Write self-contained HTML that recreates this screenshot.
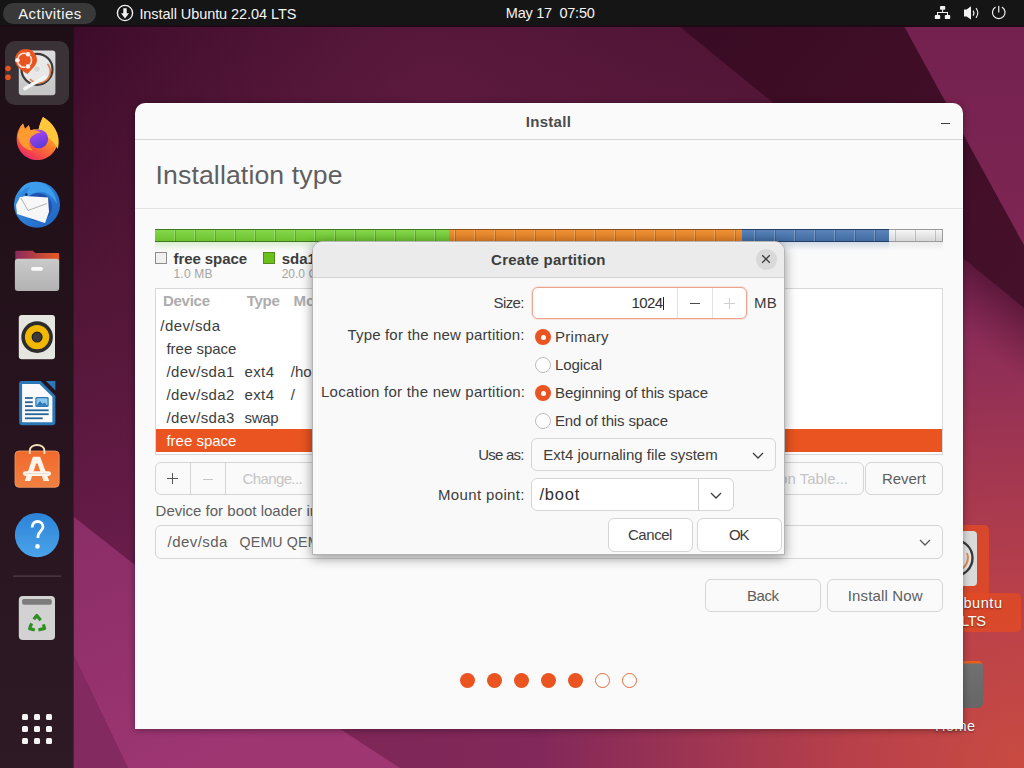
<!DOCTYPE html>
<html><head><meta charset="utf-8">
<style>
*{box-sizing:border-box;margin:0;padding:0}
html,body{width:1024px;height:768px;overflow:hidden;background:#4a1535}
body{font-family:"Liberation Sans",sans-serif;position:relative}
.a{position:absolute;white-space:nowrap}
svg{position:absolute;overflow:visible}
</style></head><body>
<svg style="left:0;top:0" width="1024" height="768" viewBox="0 0 1024 768">
<defs>
<linearGradient id="gA" gradientUnits="userSpaceOnUse" x1="74" y1="26" x2="300" y2="768">
<stop offset="0" stop-color="#3c0b29"/><stop offset="0.35" stop-color="#531637"/><stop offset="0.7" stop-color="#6a1d4c"/><stop offset="1" stop-color="#7e2758"/>
</linearGradient>
<linearGradient id="gB" gradientUnits="userSpaceOnUse" x1="700" y1="26" x2="1024" y2="300">
<stop offset="0" stop-color="#3a0b24"/><stop offset="1" stop-color="#45102a"/>
</linearGradient>
<linearGradient id="gC" gradientUnits="userSpaceOnUse" x1="0" y1="26" x2="0" y2="250">
<stop offset="0" stop-color="#74214f"/><stop offset="1" stop-color="#7e2654"/>
</linearGradient>
<radialGradient id="gD" gradientUnits="userSpaceOnUse" cx="1024" cy="768" r="760">
<stop offset="0" stop-color="#c94b41"/><stop offset="0.23" stop-color="#b8404a"/><stop offset="0.43" stop-color="#9e3552"/><stop offset="0.64" stop-color="#82285a"/><stop offset="1" stop-color="#7c2656"/>
</radialGradient>
<linearGradient id="gE" gradientUnits="userSpaceOnUse" x1="74" y1="517" x2="200" y2="768">
<stop offset="0" stop-color="#8a2d66"/><stop offset="1" stop-color="#9e3672"/>
</linearGradient>
</defs>
<rect width="1024" height="768" fill="url(#gA)"/>
<radialGradient id="gH" gradientUnits="userSpaceOnUse" cx="430" cy="90" r="380"><stop offset="0" stop-color="#6a2048" stop-opacity="0.55"/><stop offset="1" stop-color="#6a2048" stop-opacity="0"/></radialGradient>
<rect width="1024" height="768" fill="url(#gH)"/>
<polygon points="1024,305 1024,768 397,768 337,729 250,650 700,150 963,256" fill="url(#gD)"/>
<linearGradient id="gS" gradientUnits="userSpaceOnUse" x1="990" y1="277" x2="952" y2="324"><stop offset="0" stop-color="#3a0a20" stop-opacity="0.55"/><stop offset="1" stop-color="#5a1530" stop-opacity="0"/></linearGradient>
<polygon points="900,205 1024,305 1024,400 900,300" fill="url(#gS)"/>
<polygon points="679,26 904,26 1024,245 1024,308" fill="url(#gB)"/>
<polygon points="904,26 1024,26 1024,245" fill="url(#gC)"/>
<polygon points="74,517 135,565 340,729 400,768 128,768 74,656" fill="url(#gE)"/>
<polygon points="74,656 128,768 74,768" fill="#832a60"/>
</svg>
<div class="a" style="left:0px;top:0px;width:1024px;height:25px;background:#151515"></div>
<div class="a" style="left:0px;top:25px;width:1024px;height:2px;background:#1c0b14"></div>
<div class="a" style="left:3px;top:3px;width:93px;height:21px;border-radius:11px;background:#393939"></div>
<div class="a" style="left:18.20px;top:6.4px;font-size:15px;font-weight:400;color:#f4f4f4;letter-spacing:0.424px;line-height:15px;">Activities</div><svg style="left:115px;top:3px" width="20" height="20" viewBox="0 0 20 20"><circle cx="10" cy="10" r="7.6" fill="none" stroke="#f2f2f2" stroke-width="1.4"/><path d="M8.3 5.2 H11.7 V10.2 H14 L10 15.5 L6 10.2 H8.3 Z" fill="#f2f2f2"/></svg>
<div class="a" style="left:139.40px;top:6.7px;font-size:14.5px;font-weight:400;color:#f4f4f4;letter-spacing:-0.067px;line-height:14.5px;">Install Ubuntu 22.04 LTS</div><div class="a" style="left:505.80px;top:6.2px;font-size:14.5px;font-weight:400;color:#f4f4f4;letter-spacing:-0.242px;line-height:14.5px;">May 17&nbsp; 07:50</div><svg style="left:930px;top:2px" width="80" height="22" viewBox="0 0 80 22"><rect x="10" y="4" width="5.2" height="3.8" rx="0.8" fill="#f2f2f2"/><rect x="12.1" y="7.5" width="1" height="3.2" fill="#f2f2f2"/><rect x="7" y="10" width="11" height="1" fill="#f2f2f2"/><rect x="7" y="10" width="1" height="3.5" fill="#f2f2f2"/><rect x="17" y="10" width="1" height="3.5" fill="#f2f2f2"/><rect x="4.8" y="13.1" width="5.4" height="3.9" rx="0.8" fill="#f2f2f2"/><rect x="14.8" y="13.1" width="5.4" height="3.9" rx="0.8" fill="#f2f2f2"/><path d="M34 7.6 H36.6 L41 4.3 V17.6 L36.6 14.5 H34 Z" fill="#f2f2f2"/><path d="M43 8.6 Q45 11 43 13.6" fill="none" stroke="#f2f2f2" stroke-width="1.1"/><path d="M46 6.2 Q49.6 11 46 15.9" fill="none" stroke="#f2f2f2" stroke-width="1.1"/><path d="M65.6 4.95 A6.3 6.3 0 1 0 71.9 4.95" fill="none" stroke="#f2f2f2" stroke-width="1.2"/><rect x="68.15" y="3.9" width="1.2" height="6.6" fill="#f2f2f2"/></svg>
<div class="a" style="left:0px;top:27px;width:73px;height:741px;background:linear-gradient(#1e0e16,#26131d 50%,#2e1a24)"></div>
<div class="a" style="left:73px;top:27px;width:1px;height:741px;background:rgba(0,0,0,0.25)"></div>
<div class="a" style="left:5px;top:41px;width:64px;height:64px;border-radius:10px;background:#3b3237"></div>
<svg style="left:0;top:0" width="74" height="768" viewBox="0 0 74 768">
<defs>
<linearGradient id="dk1" x1="0" y1="0" x2="0" y2="1"><stop offset="0" stop-color="#dcdcdc"/><stop offset="1" stop-color="#c4c4c4"/></linearGradient>
<linearGradient id="ff1" x1="0.8" y1="0" x2="0.2" y2="1"><stop offset="0" stop-color="#ffd53a"/><stop offset="0.45" stop-color="#ff8a2a"/><stop offset="0.8" stop-color="#f5454a"/><stop offset="1" stop-color="#e0237a"/></linearGradient>
<linearGradient id="ff2" x1="0.3" y1="0" x2="0.6" y2="1"><stop offset="0" stop-color="#b046f0"/><stop offset="1" stop-color="#5a3ad8"/></linearGradient>
<linearGradient id="tb1" x1="0" y1="0" x2="1" y2="1"><stop offset="0" stop-color="#3a9ae8"/><stop offset="1" stop-color="#1f5fc0"/></linearGradient>
<linearGradient id="fl1" x1="0" y1="0" x2="1" y2="0"><stop offset="0" stop-color="#8a2a5e"/><stop offset="1" stop-color="#ea5a20"/></linearGradient>
<linearGradient id="fl2" x1="0" y1="0" x2="0" y2="1"><stop offset="0" stop-color="#cacaca"/><stop offset="1" stop-color="#b2b2b2"/></linearGradient>
<linearGradient id="sw1" x1="0" y1="0" x2="0" y2="1"><stop offset="0" stop-color="#f06a2c"/><stop offset="1" stop-color="#f08040"/></linearGradient>
<linearGradient id="hp1" x1="0" y1="0" x2="0" y2="1"><stop offset="0" stop-color="#2d82d6"/><stop offset="1" stop-color="#4aa4ea"/></linearGradient>
</defs>
<rect x="18.8" y="50.6" width="36.6" height="44.6" rx="3" fill="url(#dk1)"/>
<circle cx="37" cy="69.3" r="15.5" fill="#e8e8e8" stroke="#3a3a3a" stroke-width="2.2"/>
<path d="M47.5 64 A11.5 11.5 0 0 1 30 79" fill="none" stroke="#e57a45" stroke-width="1.6"/>
<circle cx="37" cy="69" r="3.5" fill="#d6d6d6" stroke="#f2f2f2" stroke-width="1"/>
<path d="M25 88.5 L45 77" stroke="#f4f4f4" stroke-width="3.6" stroke-linecap="round"/>
<path d="M26 49 C19.9 49 15 53.9 15 60 C15 65.5 19.5 69 27.5 74 C31.5 69 37 65.5 37 60 C37 53.9 32.1 49 26 49 Z" fill="#e95420"/>
<circle cx="24.5" cy="60.3" r="7" fill="none" stroke="#fbe3d5" stroke-width="1.6" stroke-dasharray="9.66 5" stroke-dashoffset="4.83"/>
<circle cx="17.5" cy="60.3" r="2.3" fill="#fdf0e8"/><circle cx="28" cy="54.2" r="2.3" fill="#fdf0e8"/><circle cx="28" cy="66.4" r="2.3" fill="#fdf0e8"/>
<circle cx="8" cy="68.5" r="2.8" fill="#e95420"/><circle cx="8" cy="77.3" r="2.8" fill="#e95420"/>

<path d="M23 123.5 C19 127 16.7 133 16.7 139.5 C16.7 150.9 25.9 160.1 37.3 160.1 C48.7 160.1 57.9 150.9 57.9 139.5 C57.9 131 53 123 43 117 C41 121 39.5 125 38.5 129.5 C35.5 129 32.5 129.5 30.5 130.5 L28.8 125.2 L25 129 Z" fill="url(#ff1)"/>
<path d="M38.5 129.5 C39.5 125 41 121 43 117 C48 121 54 126.5 57 133 C59.5 139 58.8 146 57.6 149 C55 143 50 138 44 136 Z" fill="#ffc73a"/>
<circle cx="38.8" cy="138.8" r="9.4" fill="url(#ff2)"/>
<path d="M17.5 136 C18.5 131 20.5 127 23 123.5 L25 129 L28.8 125.2 L30.5 130.5 C34 129.5 38 130.5 41 132.5 C36 133 32 135.5 30 139 C28.5 143 29.5 147.5 33 150.5 C26 150 19.5 146 17.5 136 Z" fill="#ff9a30"/>
<circle cx="37" cy="204.7" r="23" fill="url(#tb1)"/>
<circle cx="38" cy="207" r="14" fill="#1f52b0"/>
<path d="M20 190 C24 182 34 180 42 183 C50 186 56 194 57 204 C52 196 46 191 38 192 C32 193 28 196 24 199 Z" fill="#3d9cec"/>
<path d="M16 205 L20 197 L25 196 L48 197.5 L49 212 L45 223 L17 214 Z" fill="#f7f7f7"/>
<path d="M21 198 L28 210.5 L47 203.5" fill="none" stroke="#9aa0a8" stroke-width="0.8"/>
<path d="M20 197 C21 191 25 188 30 187 C27 191 26 194 25.5 196 Z" fill="#2f86e0"/>
<circle cx="26.3" cy="194.6" r="1.3" fill="#14213d"/>
<path d="M15.3 252 Q15.3 250.7 16.6 250.7 H33 L35 253 H57.9 Q59.2 253 59.2 254.3 V262 H15.3 Z" fill="url(#fl1)"/>
<rect x="14.9" y="258.8" width="44.3" height="32.3" rx="3" fill="url(#fl2)"/>
<rect x="31" y="266.9" width="12" height="3.8" rx="1.9" fill="#fafafa"/>

<rect x="18.8" y="314.9" width="36.2" height="44.3" rx="3" fill="#e6e6e0"/>
<circle cx="37.1" cy="337.1" r="14" fill="#f0b800" stroke="#2c2c2c" stroke-width="3.6"/>
<circle cx="37.1" cy="337.1" r="4.9" fill="#3a3a3a" stroke="#1e1e1e" stroke-width="1.2"/>

<path d="M21.6 382.4 H40 L53.9 396.3 V422 Q53.9 423.7 52.2 423.7 H22.3 Q20.6 423.7 20.6 422 V383.4 Q20.6 382.4 21.6 382.4 Z" fill="#fafafa" stroke="#2a78b8" stroke-width="3"/>
<path d="M46 381 H55.4 V390.5 Z" fill="#2a78b8"/>
<rect x="25" y="397.1" width="7.8" height="1.8" fill="#25649a"/>
<rect x="25" y="401.3" width="7.8" height="1.8" fill="#25649a"/>
<rect x="25" y="405.2" width="7.8" height="1.8" fill="#25649a"/>
<rect x="25" y="409.4" width="23.7" height="1.8" fill="#25649a"/>
<rect x="25" y="413.3" width="23.7" height="1.8" fill="#25649a"/>
<rect x="25" y="417.4" width="17.7" height="1.8" fill="#25649a"/>
<rect x="35.3" y="397.1" width="13.4" height="9.8" rx="1.5" fill="#2a78b8"/>
<rect x="36.5" y="398.3" width="11" height="7.4" rx="1" fill="#8ec6ee"/>
<path d="M36.5 405.7 L40 401 L42.5 404 L44.5 402.5 L47.5 405.7 Z" fill="#2a78b8"/>

<rect x="15" y="451" width="44.2" height="36.3" rx="4" fill="url(#sw1)" stroke="#f59a68" stroke-width="0.8"/>
<path d="M29.8 454 V450.5 A7.3 5.5 0 0 1 44.4 450.5 V454" fill="none" stroke="#f5dcbc" stroke-width="1.9"/>
<path d="M24.8 481 L32.9 456.8 L40.1 456.8 L49.2 481 L43.6 481 L37.6 463.5 L36.2 463.5 L30.4 481 Z" fill="#fff4ea"/>
<rect x="22.9" y="471.2" width="28.1" height="4.8" rx="2.4" fill="#fff4ea"/>
<rect x="25" y="473.2" width="24" height="0.8" fill="#e8d8cc"/>

<circle cx="37.1" cy="535.1" r="22.2" fill="url(#hp1)"/>
<path d="M32.2 527.5 C32.2 523 35 521.5 37.5 521.5 C40.5 521.5 43 523.5 43 527 C43 530.5 38 532 38 536 V538" fill="none" stroke="#fff" stroke-width="2.8"/>
<circle cx="37.5" cy="546.4" r="2.3" fill="#fff"/>

<rect x="13" y="575.6" width="48" height="1" fill="#5a4a52"/>

<rect x="18.8" y="596" width="36.2" height="43.9" rx="4" fill="#d2d2d2"/>
<rect x="22" y="599.1" width="29.8" height="5.7" rx="2" fill="#7c7c7c"/>
<g fill="none" stroke="#2e8f22" stroke-width="3.2" stroke-linejoin="round" transform="translate(37 623.8)">
<path d="M-3.2 -4.6 L-0.2 -8.4 L3.6 -3.6"/>
<path d="M6.4 0.6 L7.6 4.6 L1.4 6.2"/>
<path d="M-2.2 6.2 L-7.4 4.8 L-5.4 -0.4"/>
</g>
</svg>
<div class="a" style="left:22px;top:714px;width:6px;height:6px;background:#f4f4f4;border-radius:1.5px"></div>
<div class="a" style="left:22px;top:726px;width:6px;height:6px;background:#f4f4f4;border-radius:1.5px"></div>
<div class="a" style="left:22px;top:738px;width:6px;height:6px;background:#f4f4f4;border-radius:1.5px"></div>
<div class="a" style="left:34px;top:714px;width:6px;height:6px;background:#f4f4f4;border-radius:1.5px"></div>
<div class="a" style="left:34px;top:726px;width:6px;height:6px;background:#f4f4f4;border-radius:1.5px"></div>
<div class="a" style="left:34px;top:738px;width:6px;height:6px;background:#f4f4f4;border-radius:1.5px"></div>
<div class="a" style="left:46px;top:714px;width:6px;height:6px;background:#f4f4f4;border-radius:1.5px"></div>
<div class="a" style="left:46px;top:726px;width:6px;height:6px;background:#f4f4f4;border-radius:1.5px"></div>
<div class="a" style="left:46px;top:738px;width:6px;height:6px;background:#f4f4f4;border-radius:1.5px"></div>
<div class="a" style="left:919px;top:525px;width:70px;height:75px;background:rgba(225,74,36,0.82);border-radius:5px"></div>
<div class="a" style="left:887px;top:593px;width:134px;height:39px;background:rgba(225,74,36,0.82);border-radius:5px"></div>
<svg style="left:925px;top:525px" width="60" height="70" viewBox="0 0 60 70">
<rect x="7" y="6" width="45" height="55" rx="4" fill="#dadada"/>
<circle cx="29.5" cy="33" r="18" fill="#e6e6e6" stroke="#3a3a3a" stroke-width="2.4"/>
<path d="M42 28 A13 13 0 0 1 34 45" fill="none" stroke="#e38a50" stroke-width="2"/>
</svg>
<div class="a" style="left:654.28px;width:600px;text-align:center;top:595.7px;font-size:14.5px;font-weight:400;color:#ffffff;letter-spacing:0.564px;line-height:14.5px;text-shadow:0 1px 2px rgba(0,0,0,0.5)">Install Ubuntu</div><div class="a" style="left:653.88px;width:600px;text-align:center;top:613.7px;font-size:14.5px;font-weight:400;color:#ffffff;letter-spacing:-0.230px;line-height:14.5px;text-shadow:0 1px 2px rgba(0,0,0,0.5)">22.04 LTS</div><div class="a" style="left:927px;top:661px;width:56px;height:47px;background:linear-gradient(#e8601f 0,#e8601f 2px,#707070 3px,#666 100%);border-radius:5px"></div>
<div class="a" style="left:956px;top:672px;width:1px;height:28px;background:rgba(255,255,255,0.5)"></div>
<div class="a" style="left:655.22px;width:600px;text-align:center;top:719.3px;font-size:14.5px;font-weight:400;color:#ffffff;letter-spacing:0.438px;line-height:14.5px;text-shadow:0 1px 2px rgba(0,0,0,0.5)">Home</div><div class="a" style="left:135px;top:103px;width:828px;height:626px;background:#fafafa;border-radius:10px 10px 0 0;box-shadow:0 1px 7px rgba(0,0,0,0.38)"></div>
<div class="a" style="left:248.49px;width:600px;text-align:center;top:114.3px;font-size:15px;font-weight:700;color:#4b4b4b;letter-spacing:0.273px;line-height:15px;">Install</div><div class="a" style="left:941px;top:122.6px;width:8.5px;height:1.4000000000000057px;background:#3e3e3e"></div>
<div class="a" style="left:135px;top:139px;width:828px;height:1px;background:#d6d6d6"></div>
<div class="a" style="left:155.50px;top:161.5px;font-size:26.6px;font-weight:400;color:#5f5f5f;letter-spacing:0.138px;line-height:26.6px;">Installation type</div><div class="a" style="left:135px;top:208px;width:828px;height:1px;background:#e2e2e2"></div>
<div class="a" style="left:155px;top:229px;width:294px;height:12.5px;background:linear-gradient(#84d84a,#6cc230);border-top:1px solid #3f7a22;border-bottom:1px solid #3f7a22"></div>
<div class="a" style="left:449px;top:229px;width:293px;height:12.5px;background:linear-gradient(#ee9236,#e07e24);border-top:1px solid #8a4e18;border-bottom:1px solid #8a4e18"></div>
<div class="a" style="left:742px;top:229px;width:147px;height:12.5px;background:linear-gradient(#5a84ba,#406ca2);border-top:1px solid #233e66;border-bottom:1px solid #233e66"></div>
<div class="a" style="left:889px;top:229px;width:54px;height:12.5px;background:linear-gradient(#f6f6f6,#d6d6d6);border-top:1px solid #9a9a9a;border-bottom:1px solid #9a9a9a"></div>
<div class="a" style="left:942px;top:229px;width:1px;height:12.5px;background:#9a9a9a"></div>
<div class="a" style="left:174px;top:230px;width:1px;height:10.5px;background:rgba(255,255,255,0.22)"></div>
<div class="a" style="left:175px;top:230px;width:1px;height:10.5px;background:rgba(0,0,0,0.18)"></div>
<div class="a" style="left:194px;top:230px;width:1px;height:10.5px;background:rgba(255,255,255,0.22)"></div>
<div class="a" style="left:195px;top:230px;width:1px;height:10.5px;background:rgba(0,0,0,0.18)"></div>
<div class="a" style="left:214px;top:230px;width:1px;height:10.5px;background:rgba(255,255,255,0.22)"></div>
<div class="a" style="left:215px;top:230px;width:1px;height:10.5px;background:rgba(0,0,0,0.18)"></div>
<div class="a" style="left:234px;top:230px;width:1px;height:10.5px;background:rgba(255,255,255,0.22)"></div>
<div class="a" style="left:235px;top:230px;width:1px;height:10.5px;background:rgba(0,0,0,0.18)"></div>
<div class="a" style="left:254px;top:230px;width:1px;height:10.5px;background:rgba(255,255,255,0.22)"></div>
<div class="a" style="left:255px;top:230px;width:1px;height:10.5px;background:rgba(0,0,0,0.18)"></div>
<div class="a" style="left:274px;top:230px;width:1px;height:10.5px;background:rgba(255,255,255,0.22)"></div>
<div class="a" style="left:275px;top:230px;width:1px;height:10.5px;background:rgba(0,0,0,0.18)"></div>
<div class="a" style="left:294px;top:230px;width:1px;height:10.5px;background:rgba(255,255,255,0.22)"></div>
<div class="a" style="left:295px;top:230px;width:1px;height:10.5px;background:rgba(0,0,0,0.18)"></div>
<div class="a" style="left:314px;top:230px;width:1px;height:10.5px;background:rgba(255,255,255,0.22)"></div>
<div class="a" style="left:315px;top:230px;width:1px;height:10.5px;background:rgba(0,0,0,0.18)"></div>
<div class="a" style="left:334px;top:230px;width:1px;height:10.5px;background:rgba(255,255,255,0.22)"></div>
<div class="a" style="left:335px;top:230px;width:1px;height:10.5px;background:rgba(0,0,0,0.18)"></div>
<div class="a" style="left:354px;top:230px;width:1px;height:10.5px;background:rgba(255,255,255,0.22)"></div>
<div class="a" style="left:355px;top:230px;width:1px;height:10.5px;background:rgba(0,0,0,0.18)"></div>
<div class="a" style="left:374px;top:230px;width:1px;height:10.5px;background:rgba(255,255,255,0.22)"></div>
<div class="a" style="left:375px;top:230px;width:1px;height:10.5px;background:rgba(0,0,0,0.18)"></div>
<div class="a" style="left:394px;top:230px;width:1px;height:10.5px;background:rgba(255,255,255,0.22)"></div>
<div class="a" style="left:395px;top:230px;width:1px;height:10.5px;background:rgba(0,0,0,0.18)"></div>
<div class="a" style="left:414px;top:230px;width:1px;height:10.5px;background:rgba(255,255,255,0.22)"></div>
<div class="a" style="left:415px;top:230px;width:1px;height:10.5px;background:rgba(0,0,0,0.18)"></div>
<div class="a" style="left:434px;top:230px;width:1px;height:10.5px;background:rgba(255,255,255,0.22)"></div>
<div class="a" style="left:435px;top:230px;width:1px;height:10.5px;background:rgba(0,0,0,0.18)"></div>
<div class="a" style="left:454px;top:230px;width:1px;height:10.5px;background:rgba(255,255,255,0.22)"></div>
<div class="a" style="left:455px;top:230px;width:1px;height:10.5px;background:rgba(0,0,0,0.18)"></div>
<div class="a" style="left:474px;top:230px;width:1px;height:10.5px;background:rgba(255,255,255,0.22)"></div>
<div class="a" style="left:475px;top:230px;width:1px;height:10.5px;background:rgba(0,0,0,0.18)"></div>
<div class="a" style="left:494px;top:230px;width:1px;height:10.5px;background:rgba(255,255,255,0.22)"></div>
<div class="a" style="left:495px;top:230px;width:1px;height:10.5px;background:rgba(0,0,0,0.18)"></div>
<div class="a" style="left:514px;top:230px;width:1px;height:10.5px;background:rgba(255,255,255,0.22)"></div>
<div class="a" style="left:515px;top:230px;width:1px;height:10.5px;background:rgba(0,0,0,0.18)"></div>
<div class="a" style="left:534px;top:230px;width:1px;height:10.5px;background:rgba(255,255,255,0.22)"></div>
<div class="a" style="left:535px;top:230px;width:1px;height:10.5px;background:rgba(0,0,0,0.18)"></div>
<div class="a" style="left:554px;top:230px;width:1px;height:10.5px;background:rgba(255,255,255,0.22)"></div>
<div class="a" style="left:555px;top:230px;width:1px;height:10.5px;background:rgba(0,0,0,0.18)"></div>
<div class="a" style="left:574px;top:230px;width:1px;height:10.5px;background:rgba(255,255,255,0.22)"></div>
<div class="a" style="left:575px;top:230px;width:1px;height:10.5px;background:rgba(0,0,0,0.18)"></div>
<div class="a" style="left:594px;top:230px;width:1px;height:10.5px;background:rgba(255,255,255,0.22)"></div>
<div class="a" style="left:595px;top:230px;width:1px;height:10.5px;background:rgba(0,0,0,0.18)"></div>
<div class="a" style="left:614px;top:230px;width:1px;height:10.5px;background:rgba(255,255,255,0.22)"></div>
<div class="a" style="left:615px;top:230px;width:1px;height:10.5px;background:rgba(0,0,0,0.18)"></div>
<div class="a" style="left:634px;top:230px;width:1px;height:10.5px;background:rgba(255,255,255,0.22)"></div>
<div class="a" style="left:635px;top:230px;width:1px;height:10.5px;background:rgba(0,0,0,0.18)"></div>
<div class="a" style="left:654px;top:230px;width:1px;height:10.5px;background:rgba(255,255,255,0.22)"></div>
<div class="a" style="left:655px;top:230px;width:1px;height:10.5px;background:rgba(0,0,0,0.18)"></div>
<div class="a" style="left:674px;top:230px;width:1px;height:10.5px;background:rgba(255,255,255,0.22)"></div>
<div class="a" style="left:675px;top:230px;width:1px;height:10.5px;background:rgba(0,0,0,0.18)"></div>
<div class="a" style="left:694px;top:230px;width:1px;height:10.5px;background:rgba(255,255,255,0.22)"></div>
<div class="a" style="left:695px;top:230px;width:1px;height:10.5px;background:rgba(0,0,0,0.18)"></div>
<div class="a" style="left:714px;top:230px;width:1px;height:10.5px;background:rgba(255,255,255,0.22)"></div>
<div class="a" style="left:715px;top:230px;width:1px;height:10.5px;background:rgba(0,0,0,0.18)"></div>
<div class="a" style="left:734px;top:230px;width:1px;height:10.5px;background:rgba(255,255,255,0.22)"></div>
<div class="a" style="left:735px;top:230px;width:1px;height:10.5px;background:rgba(0,0,0,0.18)"></div>
<div class="a" style="left:754px;top:230px;width:1px;height:10.5px;background:rgba(255,255,255,0.22)"></div>
<div class="a" style="left:755px;top:230px;width:1px;height:10.5px;background:rgba(0,0,0,0.18)"></div>
<div class="a" style="left:774px;top:230px;width:1px;height:10.5px;background:rgba(255,255,255,0.22)"></div>
<div class="a" style="left:775px;top:230px;width:1px;height:10.5px;background:rgba(0,0,0,0.18)"></div>
<div class="a" style="left:794px;top:230px;width:1px;height:10.5px;background:rgba(255,255,255,0.22)"></div>
<div class="a" style="left:795px;top:230px;width:1px;height:10.5px;background:rgba(0,0,0,0.18)"></div>
<div class="a" style="left:814px;top:230px;width:1px;height:10.5px;background:rgba(255,255,255,0.22)"></div>
<div class="a" style="left:815px;top:230px;width:1px;height:10.5px;background:rgba(0,0,0,0.18)"></div>
<div class="a" style="left:834px;top:230px;width:1px;height:10.5px;background:rgba(255,255,255,0.22)"></div>
<div class="a" style="left:835px;top:230px;width:1px;height:10.5px;background:rgba(0,0,0,0.18)"></div>
<div class="a" style="left:854px;top:230px;width:1px;height:10.5px;background:rgba(255,255,255,0.22)"></div>
<div class="a" style="left:855px;top:230px;width:1px;height:10.5px;background:rgba(0,0,0,0.18)"></div>
<div class="a" style="left:874px;top:230px;width:1px;height:10.5px;background:rgba(255,255,255,0.22)"></div>
<div class="a" style="left:875px;top:230px;width:1px;height:10.5px;background:rgba(0,0,0,0.18)"></div>
<div class="a" style="left:894px;top:230px;width:1px;height:10.5px;background:rgba(255,255,255,0.22)"></div>
<div class="a" style="left:895px;top:230px;width:1px;height:10.5px;background:rgba(0,0,0,0.18)"></div>
<div class="a" style="left:914px;top:230px;width:1px;height:10.5px;background:rgba(255,255,255,0.22)"></div>
<div class="a" style="left:915px;top:230px;width:1px;height:10.5px;background:rgba(0,0,0,0.18)"></div>
<div class="a" style="left:934px;top:230px;width:1px;height:10.5px;background:rgba(255,255,255,0.22)"></div>
<div class="a" style="left:935px;top:230px;width:1px;height:10.5px;background:rgba(0,0,0,0.18)"></div>
<div class="a" style="left:155px;top:241.5px;width:294px;height:9.5px;background:linear-gradient(rgba(110,190,60,0.22),rgba(255,255,255,0))"></div>
<div class="a" style="left:449px;top:241.5px;width:293px;height:9.5px;background:linear-gradient(rgba(200,120,50,0.18),rgba(255,255,255,0))"></div>
<div class="a" style="left:742px;top:241.5px;width:147px;height:9.5px;background:linear-gradient(rgba(70,110,160,0.22),rgba(255,255,255,0))"></div>
<div class="a" style="left:889px;top:241.5px;width:54px;height:9.5px;background:linear-gradient(rgba(150,150,150,0.15),rgba(255,255,255,0))"></div>
<div class="a" style="left:155px;top:252px;width:12px;height:12px;border:1px solid #8d8d8d;background:#f0f0f0"></div>
<div class="a" style="left:173.50px;top:250.9px;font-size:15px;font-weight:700;color:#3d3d3d;letter-spacing:-0.080px;line-height:15px;">free space</div><div class="a" style="left:173.50px;top:268.3px;font-size:12px;font-weight:400;color:#a3a3a3;letter-spacing:0.197px;line-height:12px;">1.0 MB</div><div class="a" style="left:263px;top:252px;width:12px;height:12px;border:1px solid #4e8d1a;background:#6cc01c"></div>
<div class="a" style="left:281.70px;top:250.9px;font-size:15px;font-weight:700;color:#3d3d3d;letter-spacing:0.000px;line-height:15px;">sda1 (ext4)</div><div class="a" style="left:281.70px;top:268.3px;font-size:12px;font-weight:400;color:#a3a3a3;letter-spacing:0.000px;line-height:12px;">20.0 GB</div><div class="a" style="left:155px;top:288px;width:788px;height:167px;border:1px solid #d8d8d8;background:#ffffff"></div>
<div class="a" style="left:163.00px;top:293.3px;font-size:15px;font-weight:700;color:#adadad;letter-spacing:-0.275px;line-height:15px;">Device</div><div class="a" style="left:246.80px;top:293.3px;font-size:15px;font-weight:700;color:#adadad;letter-spacing:-0.302px;line-height:15px;">Type</div><div class="a" style="left:293.50px;top:293.3px;font-size:15px;font-weight:700;color:#adadad;letter-spacing:0.000px;line-height:15px;">Mount point</div><div class="a" style="left:160.30px;top:317.8px;font-size:15px;font-weight:400;color:#3d3d3d;letter-spacing:0.426px;line-height:15px;">/dev/sda</div><div class="a" style="left:166.40px;top:340.9px;font-size:15px;font-weight:400;color:#3d3d3d;letter-spacing:-0.005px;line-height:15px;">free space</div><div class="a" style="left:166.40px;top:363.9px;font-size:15px;font-weight:400;color:#3d3d3d;letter-spacing:0.369px;line-height:15px;">/dev/sda1</div><div class="a" style="left:244.50px;top:363.9px;font-size:15px;font-weight:400;color:#3d3d3d;letter-spacing:0.380px;line-height:15px;">ext4</div><div class="a" style="left:290.80px;top:363.9px;font-size:15px;font-weight:400;color:#3d3d3d;letter-spacing:0.000px;line-height:15px;">/home</div><div class="a" style="left:166.40px;top:387.0px;font-size:15px;font-weight:400;color:#3d3d3d;letter-spacing:0.369px;line-height:15px;">/dev/sda2</div><div class="a" style="left:244.50px;top:387.0px;font-size:15px;font-weight:400;color:#3d3d3d;letter-spacing:0.380px;line-height:15px;">ext4</div><div class="a" style="left:290.80px;top:387.0px;font-size:15px;font-weight:400;color:#3d3d3d;letter-spacing:0.000px;line-height:15px;">/</div><div class="a" style="left:166.40px;top:410.0px;font-size:15px;font-weight:400;color:#3d3d3d;letter-spacing:0.369px;line-height:15px;">/dev/sda3</div><div class="a" style="left:244.50px;top:410.0px;font-size:15px;font-weight:400;color:#3d3d3d;letter-spacing:-0.344px;line-height:15px;">swap</div><div class="a" style="left:156px;top:429px;width:786px;height:23px;background:#e95420"></div>
<div class="a" style="left:166.40px;top:433.1px;font-size:15px;font-weight:400;color:#ffffff;letter-spacing:-0.005px;line-height:15px;">free space</div><div class="a" style="left:155px;top:462px;width:709px;height:33px;border:1px solid #d5d5d5;border-radius:6px;background:#fafafa;"></div>
<div class="a" style="left:190px;top:463px;width:1px;height:31px;background:#d5d5d5"></div>
<div class="a" style="left:225px;top:463px;width:1px;height:31px;background:#d5d5d5"></div>
<div class="a" style="left:166.7px;top:478px;width:11.400000000000006px;height:1.3000000000000114px;background:#555"></div>
<div class="a" style="left:171.8px;top:473.2px;width:1.299999999999983px;height:11.199999999999989px;background:#555"></div>
<div class="a" style="left:202.7px;top:478.6px;width:10.600000000000023px;height:1.1999999999999886px;background:#c6c6c6"></div>
<div class="a" style="left:242.60px;top:471.3px;font-size:15px;font-weight:400;color:#c4c4c4;letter-spacing:-0.631px;line-height:15px;">Change...</div><div class="a" style="right:176.00px;top:470.8px;font-size:15px;font-weight:400;color:#c4c4c4;letter-spacing:0.000px;line-height:15px;">New Partition Table...</div><div class="a" style="left:865px;top:462px;width:78px;height:33px;border:1px solid #d5d5d5;border-radius:6px;background:#fafafa;"></div>
<div class="a" style="left:603.98px;width:600px;text-align:center;top:470.8px;font-size:15px;font-weight:400;color:#5e5e5e;letter-spacing:-0.037px;line-height:15px;">Revert</div><div class="a" style="left:155.60px;top:502.9px;font-size:15px;font-weight:400;color:#5e5e5e;letter-spacing:0.000px;line-height:15px;">Device for boot loader installation:</div><div class="a" style="left:155px;top:525px;width:788px;height:34px;border:1px solid #d5d5d5;border-radius:6px;background:#fafafa;"></div>
<div class="a" style="left:167.60px;top:533.7px;font-size:15px;font-weight:400;color:#5e5e5e;letter-spacing:0.426px;line-height:15px;">/dev/sda</div><div class="a" style="left:239.60px;top:534.6px;font-size:14.2px;font-weight:400;color:#5e5e5e;letter-spacing:0.150px;line-height:14.2px;">QEMU QEMU HARDDISK (21.5 GB)</div><svg style="left:918px;top:538px" width="14" height="9" viewBox="0 0 14 9"><path d="M2 2 L7 7 L12 2" fill="none" stroke="#5a5a5a" stroke-width="1.3"/></svg>
<div class="a" style="left:705px;top:579px;width:116px;height:33px;border:1px solid #d5d5d5;border-radius:6px;background:#fafafa;"></div>
<div class="a" style="left:462.77px;width:600px;text-align:center;top:588.3px;font-size:15px;font-weight:400;color:#5e5e5e;letter-spacing:-0.453px;line-height:15px;">Back</div><div class="a" style="left:827px;top:579px;width:116px;height:33px;border:1px solid #d5d5d5;border-radius:6px;background:#fafafa;"></div>
<div class="a" style="left:585.28px;width:600px;text-align:center;top:588.3px;font-size:15px;font-weight:400;color:#5e5e5e;letter-spacing:0.164px;line-height:15px;">Install Now</div><div class="a" style="left:460.0px;top:672.7px;width:15.2px;height:15.2px;border-radius:50%;background:#e95420"></div>
<div class="a" style="left:487.0px;top:672.7px;width:15.2px;height:15.2px;border-radius:50%;background:#e95420"></div>
<div class="a" style="left:514.0px;top:672.7px;width:15.2px;height:15.2px;border-radius:50%;background:#e95420"></div>
<div class="a" style="left:541.0px;top:672.7px;width:15.2px;height:15.2px;border-radius:50%;background:#e95420"></div>
<div class="a" style="left:568.0px;top:672.7px;width:15.2px;height:15.2px;border-radius:50%;background:#e95420"></div>
<div class="a" style="left:595.0px;top:672.7px;width:15.2px;height:15.2px;border-radius:50%;border:1.3px solid #e06a3a;background:#fff"></div>
<div class="a" style="left:622.0px;top:672.7px;width:15.2px;height:15.2px;border-radius:50%;border:1.3px solid #e06a3a;background:#fff"></div>
<div class="a" style="left:312px;top:241px;width:473px;height:314px;background:#f9f9f9;border:1px solid #b4b4b4;border-radius:10px 10px 0 0;box-shadow:0 3px 12px rgba(0,0,0,0.42)"></div>
<div class="a" style="left:313px;top:242px;width:471px;height:35px;background:linear-gradient(#f0f0f0,#ebebeb 3px);border-radius:9px 9px 0 0"></div>
<div class="a" style="left:313px;top:277px;width:471px;height:1px;background:#d2d2d2"></div>
<div class="a" style="left:248.42px;width:600px;text-align:center;top:251.6px;font-size:15px;font-weight:700;color:#3d3d3d;letter-spacing:0.236px;line-height:15px;">Create partition</div><div class="a" style="left:755.5px;top:248.5px;width:21.0px;height:21.0px;border-radius:50%;background:#d9d9d9"></div>
<svg style="left:760px;top:253px" width="12" height="12" viewBox="0 0 12 12"><path d="M2.2 2.2 L9.8 9.8 M9.8 2.2 L2.2 9.8" stroke="#3a3a3a" stroke-width="1.25"/></svg>
<div class="a" style="right:500.09px;top:294.7px;font-size:15px;font-weight:400;color:#3d3d3d;letter-spacing:-0.590px;line-height:15px;">Size:</div><div class="a" style="left:532px;top:287px;width:215px;height:32px;border:1px solid #eba58c;border-radius:6px;background:#ffffff;box-shadow:0 0 0 1px rgba(233,84,32,0.15)"></div>
<div class="a" style="left:677px;top:288px;width:1px;height:30px;background:#e2e2e2"></div>
<div class="a" style="left:712px;top:288px;width:1px;height:30px;background:#e2e2e2"></div>
<div class="a" style="right:361.66px;top:295.3px;font-size:15px;font-weight:400;color:#2f2f2f;letter-spacing:-0.658px;line-height:15px;">1024</div><div class="a" style="left:663px;top:297px;width:1px;height:12.5px;background:#222"></div>
<div class="a" style="left:689.8px;top:302.5px;width:10.400000000000091px;height:1.3000000000000114px;background:#4a4a4a"></div>
<div class="a" style="left:724.2px;top:302.5px;width:11.0px;height:1.1000000000000227px;background:#d0d0d0"></div>
<div class="a" style="left:729.2px;top:297.5px;width:1.099999999999909px;height:11.0px;background:#d0d0d0"></div>
<div class="a" style="left:754.00px;top:295.3px;font-size:15px;font-weight:400;color:#3d3d3d;letter-spacing:0.200px;line-height:15px;">MB</div><div class="a" style="right:499.33px;top:326.9px;font-size:15px;font-weight:400;color:#3d3d3d;letter-spacing:0.169px;line-height:15px;">Type for the new partition:</div><div class="a" style="right:498.76px;top:383.5px;font-size:15px;font-weight:400;color:#3d3d3d;letter-spacing:0.240px;line-height:15px;">Location for the new partition:</div><div class="a" style="left:535px;top:329px;width:16px;height:16px;border-radius:50%;background:#e95420"></div>
<div class="a" style="left:540.5px;top:334.5px;width:5px;height:5px;border-radius:50%;background:#fff"></div>
<div class="a" style="left:555.00px;top:328.8px;font-size:15px;font-weight:400;color:#3d3d3d;letter-spacing:0.305px;line-height:15px;">Primary</div><div class="a" style="left:535px;top:357px;width:16px;height:16px;border-radius:50%;border:1px solid #bdbdbd;background:#fff"></div>
<div class="a" style="left:555.00px;top:356.8px;font-size:15px;font-weight:400;color:#3d3d3d;letter-spacing:-0.091px;line-height:15px;">Logical</div><div class="a" style="left:535px;top:385px;width:16px;height:16px;border-radius:50%;background:#e95420"></div>
<div class="a" style="left:540.5px;top:390.5px;width:5px;height:5px;border-radius:50%;background:#fff"></div>
<div class="a" style="left:555.00px;top:384.8px;font-size:15px;font-weight:400;color:#3d3d3d;letter-spacing:-0.096px;line-height:15px;">Beginning of this space</div><div class="a" style="left:535px;top:413px;width:16px;height:16px;border-radius:50%;border:1px solid #bdbdbd;background:#fff"></div>
<div class="a" style="left:555.00px;top:412.8px;font-size:15px;font-weight:400;color:#3d3d3d;letter-spacing:-0.130px;line-height:15px;">End of this space</div><div class="a" style="right:500.26px;top:447.1px;font-size:15px;font-weight:400;color:#3d3d3d;letter-spacing:-0.760px;line-height:15px;">Use as:</div><div class="a" style="left:531px;top:438px;width:245px;height:33px;border:1px solid #d5d5d5;border-radius:6px;background:#fafafa;"></div>
<div class="a" style="left:543.30px;top:446.9px;font-size:15px;font-weight:400;color:#3d3d3d;letter-spacing:0.006px;line-height:15px;">Ext4 journaling file system</div><svg style="left:751px;top:451px" width="14" height="9" viewBox="0 0 14 9"><path d="M2 2 L7 7 L12 2" fill="none" stroke="#3d3d3d" stroke-width="1.3"/></svg>
<div class="a" style="right:499.13px;top:487.1px;font-size:15px;font-weight:400;color:#3d3d3d;letter-spacing:0.367px;line-height:15px;">Mount point:</div><div class="a" style="left:531px;top:478px;width:203px;height:33px;border:1px solid #d5d5d5;border-radius:6px;background:#ffffff;"></div>
<div class="a" style="left:698px;top:479px;width:1px;height:31px;background:#d5d5d5"></div>
<div class="a" style="left:539.50px;top:486.4px;font-size:16.5px;font-weight:400;color:#2f2f2f;letter-spacing:0.774px;line-height:16.5px;">/boot</div><svg style="left:709px;top:491px" width="14" height="9" viewBox="0 0 14 9"><path d="M2 2 L7 7 L12 2" fill="none" stroke="#3d3d3d" stroke-width="1.3"/></svg>
<div class="a" style="left:608px;top:518px;width:85px;height:34px;border:1px solid #d5d5d5;border-radius:6px;background:#ffffff;"></div>
<div class="a" style="left:349.98px;width:600px;text-align:center;top:527.3px;font-size:15px;font-weight:400;color:#3d3d3d;letter-spacing:-0.441px;line-height:15px;">Cancel</div><div class="a" style="left:697px;top:518px;width:85px;height:34px;border:1px solid #d5d5d5;border-radius:6px;background:#ffffff;"></div>
<div class="a" style="left:438.61px;width:600px;text-align:center;top:527.3px;font-size:15px;font-weight:400;color:#3d3d3d;letter-spacing:-1.188px;line-height:15px;">OK</div></body></html>
